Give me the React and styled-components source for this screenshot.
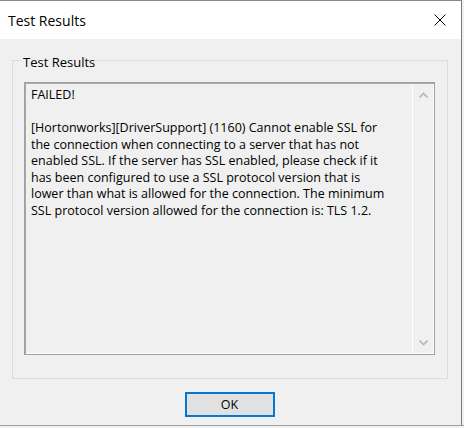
import React from "react";
import styled, { createGlobalStyle } from "styled-components";

const GlobalStyle = createGlobalStyle`
  html, body {
    margin: 0;
    padding: 0;
    background: #f0f0f0;
  }
  body {
    font-family: "Open Sans", "Noto Sans", sans-serif;
    color: #000;
  }
`;

const Screen = styled.div`
  width: 464px;
  height: 428px;
  overflow: hidden;
  display: flex;
  flex-direction: column;
`;

const Window = styled.div`
  width: 462px;
  height: 426px;
  box-sizing: border-box;
  border-top: 1px solid #8a8a8a;
  border-right: 1px solid #7a7a7a;
  background: #f0f0f0;
  display: flex;
  flex-direction: column;
`;

const TitleBar = styled.div`
  height: 38px;
  flex-shrink: 0;
  background: #fff;
  display: flex;
  align-items: center;
  justify-content: space-between;
  padding-left: 8px;
`;

const Title = styled.span`
  font-size: 14px;
  color: #000;
  margin-top: 1px;
`;

const CloseButton = styled.div`
  width: 46px;
  height: 38px;
  display: flex;
  align-items: center;
  justify-content: center;
  margin-right: -2px;
`;

const Body = styled.div`
  flex: 1;
  display: flex;
  flex-direction: column;
  padding: 21px 13px 0 12px;
`;

const GroupBox = styled.div`
  position: relative;
  height: 319px;
  box-sizing: border-box;
  border: 1px solid #dcdcdc;
  padding: 21px 12px 0 11px;
`;

const Legend = styled.span`
  position: absolute;
  top: -8px;
  left: 8px;
  padding: 0 2px;
  background: #f0f0f0;
  font-size: 13px;
  line-height: 18px;
`;

const TextBox = styled.div`
  height: 273px;
  box-sizing: border-box;
  border: 1px solid #a0a0a0;
  box-shadow: inset 1px 1px 0 #a9a9a9, inset -1px -1px 0 #ffffff;
  display: flex;
`;

const Content = styled.div`
  flex: 1;
  padding: 4px 5px 0 6px;
  font-size: 12.5px;
  line-height: 16.5px;
  white-space: pre;
  color: #000;
`;

const ScrollBar = styled.div`
  width: 20px;
  margin: 1px 1px 1px 0;
  border-left: 1px solid #ffffff;
  display: flex;
  flex-direction: column;
  justify-content: space-between;
  align-items: center;
  padding: 8px 0 7px;
`;

const FooterRow = styled.div`
  display: flex;
  justify-content: center;
  padding-top: 13px;
  padding-right: 1px;
`;

const Button = styled.button`
  width: 90px;
  height: 25px;
  box-sizing: border-box;
  border: 2px solid #0078d7;
  background: #e1e1e1;
  font-family: "Open Sans", "Noto Sans", sans-serif;
  font-size: 12.5px;
  color: #000;
  padding: 0;
`;

const BottomStrip = styled.div`
  height: 2px;
  border-top: 1px solid #a0a0a0;
  background: #f0f0f0;
`;

const Chevron = ({ up }) => (
  <svg width="9" height="6" viewBox="0 0 9 6">
    <polyline
      points={up ? "0.5,5.5 4.5,1.5 8.5,5.5" : "0.5,0.5 4.5,4.5 8.5,0.5"}
      fill="none"
      stroke="#b8b8b8"
      strokeWidth="1.6"
    />
  </svg>
);

const MESSAGE = [
  "FAILED!",
  "",
  "[Hortonworks][DriverSupport] (1160) Cannot enable SSL for",
  "the connection when connecting to a server that has not",
  "enabled SSL. If the server has SSL enabled, please check if it",
  "has been configured to use a SSL protocol version that is",
  "lower than what is allowed for the connection. The minimum",
  "SSL protocol version allowed for the connection is: TLS 1.2.",
].join("\n");

const App = () => (
  <>
    <GlobalStyle />
    <Screen>
      <Window>
        <TitleBar>
          <Title>Test Results</Title>
          <CloseButton>
            <svg width="12" height="12" viewBox="0 0 12 12">
              <path d="M0.5 0.5 L11.5 11.5 M11.5 0.5 L0.5 11.5" stroke="#000" strokeWidth="1" />
            </svg>
          </CloseButton>
        </TitleBar>
        <Body>
          <GroupBox>
            <Legend>Test Results</Legend>
            <TextBox>
              <Content>{MESSAGE}</Content>
              <ScrollBar>
                <Chevron up />
                <Chevron />
              </ScrollBar>
            </TextBox>
          </GroupBox>
          <FooterRow>
            <Button>OK</Button>
          </FooterRow>
        </Body>
      </Window>
      <BottomStrip />
    </Screen>
  </>
);

export default App;
